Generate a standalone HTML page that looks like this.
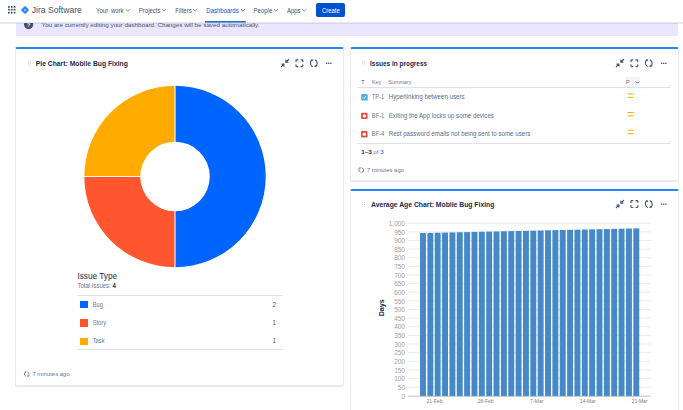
<!DOCTYPE html>
<html><head><meta charset="utf-8">
<style>
*{box-sizing:border-box;margin:0;padding:0}
html,body{width:683px;height:410px;overflow:hidden;background:#fff;font-family:"Liberation Sans",sans-serif;color:#172B4D}
.a{position:absolute;white-space:nowrap}
#hdr{position:absolute;left:0;top:0;width:683px;height:23px;background:#fff;border-bottom:1px solid #e8eaee;box-shadow:0 1px 0 rgba(9,30,66,0.09);z-index:5}
#banner{position:absolute;left:16px;top:10px;width:662px;height:26px;background:#EAE6FF}
.gad{position:absolute;background:#fff;border:1px solid #e9ebee;border-top:2px solid #2684FF;border-radius:2px;box-shadow:0 1px 1px rgba(9,30,66,0.10)}
.ic{position:absolute}
</style></head><body>

<div id="banner">
  <svg class="ic" style="left:8px;top:9.8px" width="10" height="10" viewBox="0 0 10 10"><circle cx="4.6" cy="4.6" r="4.6" fill="#42526E"/><text x="4.6" y="7" font-size="6" font-weight="bold" fill="#EAE6FF" text-anchor="middle" font-family="Liberation Sans">?</text></svg>
</div>
<div class="a" style="left:41.6px;top:20.33px;font-size:6.25px;line-height:10px;color:#42526E;font-weight:normal;transform:scaleY(0.95);transform-origin:0 7.17px;">You are currently editing your dashboard. Changes will be saved automatically.</div>

<div class="gad" style="left:15px;top:47px;width:329px;height:339px"></div>
<div class="gad" style="left:350px;top:47px;width:329px;height:134.4px"></div>
<div class="gad" style="left:350px;top:189px;width:329px;height:240px"></div>

<svg class="ic" style="left:0;top:0" width="683" height="410">

<path d="M175.00 85.80 A90.7 90.7 0 0 1 175.00 267.20 L175.00 211.30 A34.8 34.8 0 0 0 175.00 141.70 Z" fill="#0065FF"/><path d="M175.00 267.20 A90.7 90.7 0 0 1 84.30 176.50 L140.20 176.50 A34.8 34.8 0 0 0 175.00 211.30 Z" fill="#FF5630"/><path d="M84.30 176.50 A90.7 90.7 0 0 1 175.00 85.80 L175.00 141.70 A34.8 34.8 0 0 0 140.20 176.50 Z" fill="#FFAB00"/><g stroke="#fff" stroke-width="1.1"><line x1="175.0" y1="84.8" x2="175.0" y2="142.7"/><line x1="175.0" y1="210.3" x2="175.0" y2="268.2"/><line x1="83.3" y1="176.5" x2="141.2" y2="176.5"/></g>
<g transform="translate(281.0 59.2)"><g fill="none" stroke="#42526E" stroke-width="1.2" stroke-linecap="round" stroke-linejoin="round"><path d="M4.9 1 V3 H6.9 M4.9 3 L7.6 0.3"/><path d="M0.9 4.9 H2.9 V6.9 M2.9 4.9 L0.3 7.5"/></g></g><g transform="translate(295.4 59.2)"><g fill="none" stroke="#42526E" stroke-width="1.2" stroke-linecap="round"><path d="M0.6 2.4 V1.4 Q0.6 0.6 1.4 0.6 H2.4"/><path d="M5.6 0.6 H6.6 Q7.4 0.6 7.4 1.4 V2.4"/><path d="M7.4 5.6 V6.6 Q7.4 7.4 6.6 7.4 H5.6"/><path d="M2.4 7.4 H1.4 Q0.6 7.4 0.6 6.6 V5.6"/></g></g><g transform="translate(309.8 59.2)"><g fill="none" stroke="#42526E" stroke-width="1.1" stroke-linecap="round" stroke-linejoin="round"><path d="M2.9 0.9 H1.7 Q0.6 1.7 0.6 3.8 Q0.7 6.2 2.5 7.3"/><path d="M5.4 0.7 Q7.3 1.8 7.4 4.2 Q7.3 6.3 6.3 7.1 H5.1"/></g><path d="M1.6 0.1 L3.3 1.0 L2.0 2.4 Z" fill="#42526E"/><path d="M6.4 7.9 L4.7 7.0 L6.0 5.6 Z" fill="#42526E"/></g><g transform="translate(325.5 59.2)"><g fill="#42526E"><rect x="0.45" y="3.35" width="1.4" height="1.4" rx="0.4"/><rect x="2.55" y="3.35" width="1.4" height="1.4" rx="0.4"/><rect x="4.65" y="3.35" width="1.4" height="1.4" rx="0.4"/></g></g>
<g transform="translate(616.0 59.2)"><g fill="none" stroke="#42526E" stroke-width="1.2" stroke-linecap="round" stroke-linejoin="round"><path d="M4.9 1 V3 H6.9 M4.9 3 L7.6 0.3"/><path d="M0.9 4.9 H2.9 V6.9 M2.9 4.9 L0.3 7.5"/></g></g><g transform="translate(630.4 59.2)"><g fill="none" stroke="#42526E" stroke-width="1.2" stroke-linecap="round"><path d="M0.6 2.4 V1.4 Q0.6 0.6 1.4 0.6 H2.4"/><path d="M5.6 0.6 H6.6 Q7.4 0.6 7.4 1.4 V2.4"/><path d="M7.4 5.6 V6.6 Q7.4 7.4 6.6 7.4 H5.6"/><path d="M2.4 7.4 H1.4 Q0.6 7.4 0.6 6.6 V5.6"/></g></g><g transform="translate(644.8 59.2)"><g fill="none" stroke="#42526E" stroke-width="1.1" stroke-linecap="round" stroke-linejoin="round"><path d="M2.9 0.9 H1.7 Q0.6 1.7 0.6 3.8 Q0.7 6.2 2.5 7.3"/><path d="M5.4 0.7 Q7.3 1.8 7.4 4.2 Q7.3 6.3 6.3 7.1 H5.1"/></g><path d="M1.6 0.1 L3.3 1.0 L2.0 2.4 Z" fill="#42526E"/><path d="M6.4 7.9 L4.7 7.0 L6.0 5.6 Z" fill="#42526E"/></g><g transform="translate(660.5 59.2)"><g fill="#42526E"><rect x="0.45" y="3.35" width="1.4" height="1.4" rx="0.4"/><rect x="2.55" y="3.35" width="1.4" height="1.4" rx="0.4"/><rect x="4.65" y="3.35" width="1.4" height="1.4" rx="0.4"/></g></g>
<g transform="translate(616.0 200.1)"><g fill="none" stroke="#42526E" stroke-width="1.2" stroke-linecap="round" stroke-linejoin="round"><path d="M4.9 1 V3 H6.9 M4.9 3 L7.6 0.3"/><path d="M0.9 4.9 H2.9 V6.9 M2.9 4.9 L0.3 7.5"/></g></g><g transform="translate(630.4 200.1)"><g fill="none" stroke="#42526E" stroke-width="1.2" stroke-linecap="round"><path d="M0.6 2.4 V1.4 Q0.6 0.6 1.4 0.6 H2.4"/><path d="M5.6 0.6 H6.6 Q7.4 0.6 7.4 1.4 V2.4"/><path d="M7.4 5.6 V6.6 Q7.4 7.4 6.6 7.4 H5.6"/><path d="M2.4 7.4 H1.4 Q0.6 7.4 0.6 6.6 V5.6"/></g></g><g transform="translate(644.8 200.1)"><g fill="none" stroke="#42526E" stroke-width="1.1" stroke-linecap="round" stroke-linejoin="round"><path d="M2.9 0.9 H1.7 Q0.6 1.7 0.6 3.8 Q0.7 6.2 2.5 7.3"/><path d="M5.4 0.7 Q7.3 1.8 7.4 4.2 Q7.3 6.3 6.3 7.1 H5.1"/></g><path d="M1.6 0.1 L3.3 1.0 L2.0 2.4 Z" fill="#42526E"/><path d="M6.4 7.9 L4.7 7.0 L6.0 5.6 Z" fill="#42526E"/></g><g transform="translate(660.5 200.1)"><g fill="#42526E"><rect x="0.45" y="3.35" width="1.4" height="1.4" rx="0.4"/><rect x="2.55" y="3.35" width="1.4" height="1.4" rx="0.4"/><rect x="4.65" y="3.35" width="1.4" height="1.4" rx="0.4"/></g></g>
<g fill="#d3d7de"><rect x="28.0" y="60.8" width="1" height="1"/><rect x="28.0" y="62.6" width="1" height="1"/><rect x="28.0" y="64.4" width="1" height="1"/><rect x="29.8" y="60.8" width="1" height="1"/><rect x="29.8" y="62.6" width="1" height="1"/><rect x="29.8" y="64.4" width="1" height="1"/><rect x="362.2" y="61.0" width="1" height="1"/><rect x="362.2" y="62.8" width="1" height="1"/><rect x="362.2" y="64.6" width="1" height="1"/><rect x="364.0" y="61.0" width="1" height="1"/><rect x="364.0" y="62.8" width="1" height="1"/><rect x="364.0" y="64.6" width="1" height="1"/><rect x="362.2" y="202.2" width="1" height="1"/><rect x="362.2" y="204.0" width="1" height="1"/><rect x="362.2" y="205.8" width="1" height="1"/><rect x="364.0" y="202.2" width="1" height="1"/><rect x="364.0" y="204.0" width="1" height="1"/><rect x="364.0" y="205.8" width="1" height="1"/></g>
<g transform="translate(24 371.5) scale(0.7 0.65)"><g fill="none" stroke="#505F79" stroke-width="1.1" stroke-linecap="round" stroke-linejoin="round"><path d="M2.9 0.9 H1.7 Q0.6 1.7 0.6 3.8 Q0.7 6.2 2.5 7.3"/><path d="M5.4 0.7 Q7.3 1.8 7.4 4.2 Q7.3 6.3 6.3 7.1 H5.1"/></g><path d="M1.6 0.1 L3.3 1.0 L2.0 2.4 Z" fill="#505F79"/><path d="M6.4 7.9 L4.7 7.0 L6.0 5.6 Z" fill="#505F79"/></g>
<g transform="translate(358.4 167.3) scale(0.7 0.65)"><g fill="none" stroke="#505F79" stroke-width="1.1" stroke-linecap="round" stroke-linejoin="round"><path d="M2.9 0.9 H1.7 Q0.6 1.7 0.6 3.8 Q0.7 6.2 2.5 7.3"/><path d="M5.4 0.7 Q7.3 1.8 7.4 4.2 Q7.3 6.3 6.3 7.1 H5.1"/></g><path d="M1.6 0.1 L3.3 1.0 L2.0 2.4 Z" fill="#505F79"/><path d="M6.4 7.9 L4.7 7.0 L6.0 5.6 Z" fill="#505F79"/></g>
</svg>
<svg class="ic" style="left:0;top:0" width="683" height="410">
<g stroke="#e2e2e2" stroke-width="0.7"><line x1="408" y1="387.17" x2="651" y2="387.17"/><line x1="408" y1="378.54" x2="651" y2="378.54"/><line x1="408" y1="369.91" x2="651" y2="369.91"/><line x1="408" y1="361.28" x2="651" y2="361.28"/><line x1="408" y1="352.65" x2="651" y2="352.65"/><line x1="408" y1="344.02" x2="651" y2="344.02"/><line x1="408" y1="335.39" x2="651" y2="335.39"/><line x1="408" y1="326.76" x2="651" y2="326.76"/><line x1="408" y1="318.13" x2="651" y2="318.13"/><line x1="408" y1="309.50" x2="651" y2="309.50"/><line x1="408" y1="300.87" x2="651" y2="300.87"/><line x1="408" y1="292.24" x2="651" y2="292.24"/><line x1="408" y1="283.61" x2="651" y2="283.61"/><line x1="408" y1="274.98" x2="651" y2="274.98"/><line x1="408" y1="266.35" x2="651" y2="266.35"/><line x1="408" y1="257.72" x2="651" y2="257.72"/><line x1="408" y1="249.09" x2="651" y2="249.09"/><line x1="408" y1="240.46" x2="651" y2="240.46"/><line x1="408" y1="231.83" x2="651" y2="231.83"/><line x1="408" y1="223.20" x2="651" y2="223.20"/></g>
<g fill="#4689C8"><rect x="420.00" y="233.04" width="5.95" height="163.16"/><rect x="427.36" y="232.88" width="5.95" height="163.32"/><rect x="434.71" y="232.72" width="5.95" height="163.48"/><rect x="442.06" y="232.56" width="5.95" height="163.64"/><rect x="449.42" y="232.40" width="5.95" height="163.80"/><rect x="456.77" y="232.23" width="5.95" height="163.97"/><rect x="464.13" y="232.07" width="5.95" height="164.13"/><rect x="471.49" y="231.91" width="5.95" height="164.29"/><rect x="478.84" y="231.75" width="5.95" height="164.45"/><rect x="486.19" y="231.59" width="5.95" height="164.61"/><rect x="493.55" y="231.43" width="5.95" height="164.77"/><rect x="500.90" y="231.27" width="5.95" height="164.93"/><rect x="508.26" y="231.11" width="5.95" height="165.09"/><rect x="515.62" y="230.95" width="5.95" height="165.25"/><rect x="522.97" y="230.79" width="5.95" height="165.41"/><rect x="530.33" y="230.63" width="5.95" height="165.57"/><rect x="537.68" y="230.47" width="5.95" height="165.73"/><rect x="545.03" y="230.31" width="5.95" height="165.89"/><rect x="552.39" y="230.15" width="5.95" height="166.05"/><rect x="559.75" y="229.98" width="5.95" height="166.22"/><rect x="567.10" y="229.82" width="5.95" height="166.38"/><rect x="574.46" y="229.66" width="5.95" height="166.54"/><rect x="581.81" y="229.50" width="5.95" height="166.70"/><rect x="589.16" y="229.34" width="5.95" height="166.86"/><rect x="596.52" y="229.18" width="5.95" height="167.02"/><rect x="603.88" y="229.02" width="5.95" height="167.18"/><rect x="611.23" y="228.86" width="5.95" height="167.34"/><rect x="618.59" y="228.70" width="5.95" height="167.50"/><rect x="625.94" y="228.54" width="5.95" height="167.66"/><rect x="633.30" y="228.38" width="5.95" height="167.82"/></g>
<line x1="408" y1="396.2" x2="651" y2="396.2" stroke="#a8a8a8" stroke-width="0.7"/>
<g font-family="Liberation Sans" font-size="6.5" fill="#a0a0a0" text-anchor="end"><text x="405" y="398.50">0</text><text x="405" y="389.87">50</text><text x="405" y="381.24">100</text><text x="405" y="372.61">150</text><text x="405" y="363.98">200</text><text x="405" y="355.35">250</text><text x="405" y="346.72">300</text><text x="405" y="338.09">350</text><text x="405" y="329.46">400</text><text x="405" y="320.83">450</text><text x="405" y="312.20">500</text><text x="405" y="303.57">550</text><text x="405" y="294.94">600</text><text x="405" y="286.31">650</text><text x="405" y="277.68">700</text><text x="405" y="269.05">750</text><text x="405" y="260.42">800</text><text x="405" y="251.79">850</text><text x="405" y="243.16">900</text><text x="405" y="234.53">950</text><text x="405" y="225.90">1,000</text></g>
<g font-family="Liberation Sans" font-size="5" fill="#808080" text-anchor="middle"><text x="434.5" y="402.6">21-Feb</text><text x="485.6" y="402.6">28-Feb</text><text x="536.8" y="402.6">7-Mar</text><text x="587.8" y="402.6">14-Mar</text><text x="639.6" y="402.6">21-Mar</text></g>
<text transform="translate(384.3 307.8) rotate(-90)" font-family="Liberation Sans" font-size="7.1" font-weight="bold" fill="#172B4D" text-anchor="middle">Days</text>
</svg>

<div class="a" style="left:35.8px;top:58.65px;font-size:6.77px;line-height:10px;color:#172B4D;font-weight:bold;transform:scaleY(1.03);transform-origin:0 7.35px;">Pie Chart: Mobile Bug Fixing</div>
<div class="a" style="left:77.4px;top:272.14px;font-size:8.26px;line-height:10px;color:#172B4D;font-weight:normal;">Issue Type</div>
<div class="a" style="left:77.4px;top:280.92px;font-size:6.0px;line-height:10px;color:#6B778C;font-weight:normal;transform:scaleY(1.12);transform-origin:0 7.08px;">Total Issues: <b style="color:#172B4D">4</b></div>
<div class="a" style="left:77px;top:295px;width:205.5px;height:1px;background:#dfe1e6"></div>
<div class="a" style="left:77px;top:349px;width:205.5px;height:1px;background:#dfe1e6"></div>
<div class="a" style="left:80.2px;top:301px;width:7.6px;height:7.4px;background:#0065FF"></div>
<div class="a" style="left:80.2px;top:319.3px;width:7.6px;height:7.4px;background:#FF5630"></div>
<div class="a" style="left:80.2px;top:337.6px;width:7.6px;height:7.4px;background:#FFAB00"></div>
<div class="a" style="left:92.7px;top:299.81px;font-size:5.75px;line-height:10px;color:#6B778C;font-weight:normal;transform:scaleY(1.18);transform-origin:0 6.99px;">Bug</div><div class="a" style="left:262px;top:299.65px;font-size:6.2px;line-height:10px;color:#42526E;font-weight:normal;transform:scaleY(1.1);transform-origin:0 7.15px;width:14px;text-align:right;">2</div><div class="a" style="left:92.7px;top:318.11px;font-size:5.75px;line-height:10px;color:#6B778C;font-weight:normal;transform:scaleY(1.18);transform-origin:0 6.99px;">Story</div><div class="a" style="left:262px;top:317.95px;font-size:6.2px;line-height:10px;color:#42526E;font-weight:normal;transform:scaleY(1.1);transform-origin:0 7.15px;width:14px;text-align:right;">1</div><div class="a" style="left:92.7px;top:336.41px;font-size:5.75px;line-height:10px;color:#6B778C;font-weight:normal;transform:scaleY(1.18);transform-origin:0 6.99px;">Task</div><div class="a" style="left:262px;top:336.25px;font-size:6.2px;line-height:10px;color:#42526E;font-weight:normal;transform:scaleY(1.1);transform-origin:0 7.15px;width:14px;text-align:right;">1</div>
<div class="a" style="left:32.4px;top:369.24px;font-size:5.95px;line-height:10px;color:#6B778C;font-weight:normal;transform:scaleY(1.05);transform-origin:0 7.06px;">7 minutes ago</div>

<div class="a" style="left:370px;top:58.85px;font-size:6.48px;line-height:10px;color:#172B4D;font-weight:bold;transform:scaleY(1.05);transform-origin:0 7.25px;">Issues in progress</div>
<div class="a" style="left:361.3px;top:77.23px;font-size:5.4px;line-height:10px;color:#42526E;font-weight:normal;transform:scaleY(1.1);transform-origin:0 6.87px;">T</div>
<div class="a" style="left:372px;top:77.23px;font-size:5.4px;line-height:10px;color:#6B778C;font-weight:normal;transform:scaleY(1.1);transform-origin:0 6.87px;">Key</div>
<div class="a" style="left:388.3px;top:77.23px;font-size:5.4px;line-height:10px;color:#6B778C;font-weight:normal;transform:scaleY(1.1);transform-origin:0 6.87px;">Summary</div>
<div class="a" style="left:624.6px;top:77.3px;width:15px;height:10px;background:#F4F5F7"></div>
<div class="a" style="left:626px;top:77.23px;font-size:5.4px;line-height:10px;color:#6B778C;font-weight:normal;transform:scaleY(1.1);transform-origin:0 6.87px;">P</div>
<svg class="ic" style="left:0;top:0" width="683" height="410">
  <path d="M636 81.6 L637.6 83.2 L639.2 81.6" fill="none" stroke="#42526E" stroke-width="0.9"/>
  <rect x="357.6" y="87" width="313" height="1.1" fill="#dfe1e6"/>
  <rect x="357.6" y="143" width="313" height="1" fill="#dfe1e6"/>
  <rect x="361.1" y="94" width="6.6" height="6.4" rx="1" fill="#4BADE8"/>
  <path d="M362.8 97.3 L364 98.5 L366 95.8" fill="none" stroke="#fff" stroke-width="0.9"/>
  <rect x="361.1" y="112.8" width="6.4" height="6.3" rx="1" fill="#E5493A"/>
  <circle cx="364.3" cy="115.9" r="1.7" fill="#fff"/>
  <rect x="361.1" y="131.1" width="6.4" height="6.3" rx="1" fill="#E5493A"/>
  <circle cx="364.3" cy="134.2" r="1.7" fill="#fff"/>
  <g fill="#FFAB00"><rect x="627.4" y="93.4" width="5.8" height="1"/><rect x="627.4" y="96.8" width="5.8" height="1"/>
  <rect x="627.4" y="112.0" width="5.8" height="1"/><rect x="627.4" y="115.4" width="5.8" height="1"/>
  <rect x="627.4" y="129.7" width="5.8" height="1"/><rect x="627.4" y="133.1" width="5.8" height="1"/></g>
</svg>
<div class="a" style="left:371.8px;top:92.01px;font-size:5.75px;line-height:10px;color:#6B778C;font-weight:normal;transform:scaleY(1.12);transform-origin:0 6.99px;">TP-1</div><div class="a" style="left:388.7px;top:91.85px;font-size:6.2px;line-height:10px;color:#5E6C84;font-weight:normal;transform:scaleY(1.08);transform-origin:0 7.15px;">Hyperlinking between users</div><div class="a" style="left:371.8px;top:110.91px;font-size:5.75px;line-height:10px;color:#6B778C;font-weight:normal;transform:scaleY(1.12);transform-origin:0 6.99px;">BF-1</div><div class="a" style="left:388.7px;top:110.75px;font-size:6.2px;line-height:10px;color:#5E6C84;font-weight:normal;transform:scaleY(1.08);transform-origin:0 7.15px;">Exiting the App locks up some devices</div><div class="a" style="left:371.8px;top:128.81px;font-size:5.75px;line-height:10px;color:#6B778C;font-weight:normal;transform:scaleY(1.12);transform-origin:0 6.99px;">BF-4</div><div class="a" style="left:388.7px;top:128.65px;font-size:6.2px;line-height:10px;color:#5E6C84;font-weight:normal;transform:scaleY(1.08);transform-origin:0 7.15px;">Rest password emails not being sent to some users</div>
<div class="a" style="left:361.3px;top:146.55px;font-size:6.2px;line-height:10px;color:#6B778C;font-weight:normal;"><b style="color:#172B4D">1–3</b> of <span style="color:#0052CC">3</span></div>
<div class="a" style="left:366.7px;top:165.14px;font-size:5.95px;line-height:10px;color:#6B778C;font-weight:normal;transform:scaleY(1.02);transform-origin:0 7.06px;">7 minutes ago</div>

<div class="a" style="left:371px;top:199.74px;font-size:6.8px;line-height:10px;color:#172B4D;font-weight:bold;transform:scaleY(1.08);transform-origin:0 7.36px;">Average Age Chart: Mobile Bug Fixing</div>

<div id="hdr">
  <svg class="ic" style="left:7.6px;top:6.2px" width="8" height="8" viewBox="0 0 8 8" fill="#42526E"><rect x="0" y="0" width="1.75" height="1.75" rx="0.3"/><rect x="2.85" y="0" width="1.75" height="1.75" rx="0.3"/><rect x="5.7" y="0" width="1.75" height="1.75" rx="0.3"/><rect x="0" y="2.85" width="1.75" height="1.75" rx="0.3"/><rect x="2.85" y="2.85" width="1.75" height="1.75" rx="0.3"/><rect x="5.7" y="2.85" width="1.75" height="1.75" rx="0.3"/><rect x="0" y="5.7" width="1.75" height="1.75" rx="0.3"/><rect x="2.85" y="5.7" width="1.75" height="1.75" rx="0.3"/><rect x="5.7" y="5.7" width="1.75" height="1.75" rx="0.3"/></svg>
  <svg class="ic" style="left:21.4px;top:6.0px" width="8" height="8" viewBox="0 0 8 8"><path d="M3.6 0.3 Q4 0 4.4 0.3 L7.7 3.6 Q8 4 7.7 4.4 L4.4 7.7 Q4 8 3.6 7.7 L0.3 4.4 Q0 4 0.3 3.6 Z M4 3.0 L3.0 4 L4 5.0 L5.0 4 Z" fill="#2684FF" fill-rule="evenodd"/></svg>
  <div class="a" style="left:31.7px;top:4.92px;font-size:8.6px;line-height:10px;color:#42526E;font-weight:normal;">Jira Software</div>
  <div class="a" style="left:96px;top:5.82px;font-size:6.0px;line-height:10px;color:#42526E;font-weight:normal;transform:scaleY(1.16);transform-origin:0 7.08px;word-spacing:1.1px;">Your&nbsp;work</div><div class="a" style="left:138.8px;top:5.82px;font-size:6.0px;line-height:10px;color:#42526E;font-weight:normal;transform:scaleY(1.16);transform-origin:0 7.08px;">Projects</div><div class="a" style="left:175.3px;top:5.82px;font-size:6.0px;line-height:10px;color:#42526E;font-weight:normal;transform:scaleY(1.16);transform-origin:0 7.08px;">Filters</div><div class="a" style="left:206.3px;top:5.82px;font-size:6.0px;line-height:10px;color:#0052CC;font-weight:normal;transform:scaleY(1.16);transform-origin:0 7.08px;">Dashboards</div><div class="a" style="left:253.6px;top:5.82px;font-size:6.0px;line-height:10px;color:#42526E;font-weight:normal;transform:scaleY(1.16);transform-origin:0 7.08px;">People</div><div class="a" style="left:286.9px;top:5.82px;font-size:6.0px;line-height:10px;color:#42526E;font-weight:normal;transform:scaleY(1.16);transform-origin:0 7.08px;">Apps</div>
  <svg class="ic" style="left:0;top:0" width="683" height="23">
    <g fill="none" stroke="#6B778C" stroke-width="0.85" stroke-linecap="round" stroke-linejoin="round"><path d="M126.2 9.5 L127.95 11.2 L129.7 9.5"/><path d="M162.2 9.5 L163.95 11.2 L165.7 9.5"/><path d="M193.4 9.5 L195.15 11.2 L196.9 9.5"/><path d="M241.2 9.5 L242.95 11.2 L244.7 9.5" stroke="#0052CC"/><path d="M274.1 9.5 L275.85 11.2 L277.6 9.5"/><path d="M302.4 9.5 L304.15 11.2 L305.9 9.5"/></g>
    <rect x="205" y="21" width="40.8" height="1.6" fill="#0052CC" opacity="0.85"/>
  </svg>
  <div class="a" style="left:316.4px;top:2.7px;width:28.8px;height:14.3px;background:#0052CC;border-radius:2px"></div>
  <div class="a" style="left:322px;top:5.84px;font-size:5.95px;line-height:10px;color:#fff;font-weight:normal;transform:scaleY(1.14);transform-origin:0 7.06px;">Create</div>
</div>

</body></html>
